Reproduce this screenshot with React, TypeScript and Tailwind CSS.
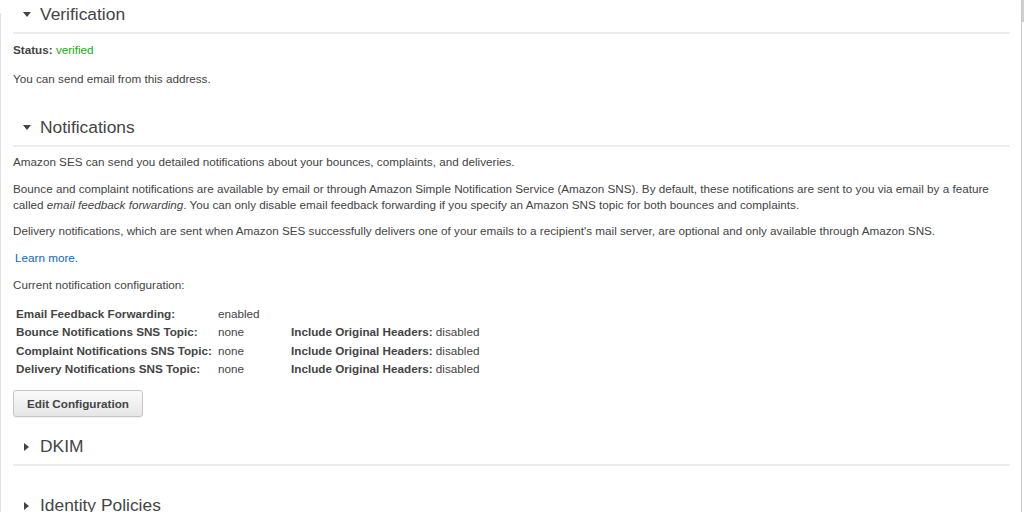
import React from 'react';

type SectionHeaderProps = {
  title: string;
  open?: boolean;
};

// Collapsible section header with a small caret and a light rule below
const SectionHeader: React.FC<SectionHeaderProps> = ({ title, open = false }) => (
  <div className="flex items-center border-b-2 border-[#ececec] pt-[3px] pb-[7px]">
    <div className="w-[27px] flex justify-center">
      {open ? (
        <svg width="8" height="5" viewBox="0 0 8 5" className="mt-[1px]">
          <path d="M0 0 L8 0 L4 5 Z" fill="#444" />
        </svg>
      ) : (
        <svg width="5" height="8" viewBox="0 0 5 8" className="mt-[1px]">
          <path d="M0 0 L5 4 L0 8 Z" fill="#444" />
        </svg>
      )}
    </div>
    <h2 className="text-[17.4px] leading-[22px] text-[#444] font-normal">{title}</h2>
  </div>
);

const configRows = [
  { label: 'Email Feedback Forwarding:', value: 'enabled', headers: null },
  { label: 'Bounce Notifications SNS Topic:', value: 'none', headers: 'disabled' },
  { label: 'Complaint Notifications SNS Topic:', value: 'none', headers: 'disabled' },
  { label: 'Delivery Notifications SNS Topic:', value: 'none', headers: 'disabled' },
];

export default function App() {
  return (
    <div className="flex w-[1024px] h-[512px] overflow-hidden bg-white font-['Liberation_Sans',Arial,sans-serif] text-[11.7px] leading-[16px] text-[#444]">
      {/* left panel edge */}
      <div className="w-[2px] shrink-0">
        <div className="mt-[13px] h-full border-l border-[#e2e2e2]" />
      </div>

      {/* main content */}
      <div className="flex-1 pl-[11px] pr-[11px]">
        {/* Verification */}
        <SectionHeader title="Verification" open />
        <p className="mt-[8px]">
          <span className="font-bold">Status:</span> <span className="text-[#22aa22]">verified</span>
        </p>
        <p className="mt-[13px]">You can send email from this address.</p>

        {/* Notifications */}
        <div className="mt-[26px]">
          <SectionHeader title="Notifications" open />
        </div>
        <p className="mt-[7px]">
          Amazon SES can send you detailed notifications about your bounces, complaints, and deliveries.
        </p>
        <p className="mt-[11px]">
          Bounce and complaint notifications are available by email or through Amazon Simple Notification Service (Amazon SNS). By default, these notifications are sent to you via email by a feature called <em>email feedback forwarding</em>. You can only disable email feedback forwarding if you specify an Amazon SNS topic for both bounces and complaints.
        </p>
        <p className="mt-[10px]">
          Delivery notifications, which are sent when Amazon SES successfully delivers one of your emails to a recipient's mail server, are optional and only available through Amazon SNS.
        </p>
        <p className="mt-[11px] ml-[2px]">
          <a href="#" className="text-[#1166bb]">Learn more.</a>
        </p>
        <p className="mt-[11px]">Current notification configuration:</p>

        <div className="mt-[12px] pl-[3px] grid grid-cols-[202px_73px_auto] leading-[18.3px]">
          {configRows.map((row) => (
            <React.Fragment key={row.label}>
              <div className="font-bold whitespace-nowrap">{row.label}</div>
              <div>{row.value}</div>
              <div>
                {row.headers && (
                  <>
                    <span className="font-bold">Include Original Headers:</span> {row.headers}
                  </>
                )}
              </div>
            </React.Fragment>
          ))}
        </div>

        <button className="mt-[12px] w-[130px] h-[27px] rounded-[3px] border border-[#c6c6c6] bg-gradient-to-b from-[#fafafa] to-[#e6e6e6] font-bold text-[11.7px] text-[#444] shadow-[0_1px_1px_rgba(0,0,0,0.06)]">
          Edit Configuration
        </button>

        {/* DKIM */}
        <div className="mt-[15px]">
          <SectionHeader title="DKIM" />
        </div>

        {/* Identity Policies */}
        <div className="mt-[25px]">
          <SectionHeader title="Identity Policies" />
        </div>
      </div>

      {/* scrollbar edge */}
      <div className="w-[3px] shrink-0 border-l border-[#c8c8c8]">
        <div className="h-[22px] bg-[#cfcfcf]" />
      </div>
    </div>
  );
}
